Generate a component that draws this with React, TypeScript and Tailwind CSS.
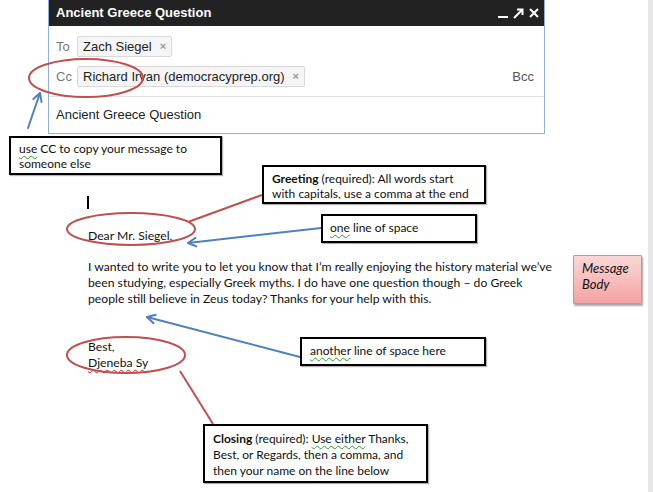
import React from "react";

const BLUE = "#4f81bd";
const RED = "#c0504d";

function Arrow({ x1, y1, x2, y2, color }: { x1: number; y1: number; x2: number; y2: number; color: string }) {
  const a = Math.atan2(y1 - y2, x1 - x2);
  const L = 9;
  const s = 0.5;
  const p1 = [x2 + L * Math.cos(a + s), y2 + L * Math.sin(a + s)];
  const p2 = [x2 + L * Math.cos(a - s), y2 + L * Math.sin(a - s)];
  return (
    <g stroke={color} strokeWidth={2} fill="none" strokeLinecap="round" strokeLinejoin="round">
      <line x1={x1} y1={y1} x2={x2} y2={y2} />
      <polyline points={`${p1[0]},${p1[1]} ${x2},${y2} ${p2[0]},${p2[1]}`} />
    </g>
  );
}

function Chip({ label }: { label: string }) {
  return (
    <div className="flex items-center h-[21px] border border-[#d9d9d9] bg-[#f5f5f5] rounded-[2px] pl-[5px] pr-[5px] gap-[8px]">
      <span className="text-[13px] text-[#222]">{label}</span>
      <span className="text-[11px] text-[#999] font-bold leading-none">×</span>
    </div>
  );
}

const doc = { fontFamily: "Lato, 'Open Sans', sans-serif" };

export default function App() {
  return (
    <div className="flex w-[653px] h-[492px] bg-white overflow-hidden">
      <div className="relative flex-1 flex flex-col">
        {/* Compose window */}
        <div
          className="ml-[48px] w-[497px] h-[134px] border border-t-0 border-[#8db1d9] flex flex-col"
          style={{ fontFamily: "'Liberation Sans', Arial, sans-serif" }}
        >
          <div className="h-[26px] bg-[#222] flex items-center justify-between pl-[7px] pr-[4px]">
            <span className="text-white text-[13px] font-bold">Ancient Greece Question</span>
            <div className="flex items-center gap-[3px] text-white">
              <svg width="12" height="12" viewBox="0 0 12 12"><rect x="1" y="9" width="10" height="2" fill="white" /></svg>
              <svg width="13" height="13" viewBox="0 0 13 13"><path d="M2 11 L10 3 M5 2.5 H10.5 V8" stroke="white" strokeWidth="2" fill="none" /></svg>
              <svg width="12" height="12" viewBox="0 0 12 12"><path d="M2 2 L10 10 M10 2 L2 10" stroke="white" strokeWidth="2" /></svg>
            </div>
          </div>
          <div className="flex flex-col px-[7px] pt-[10px] gap-[9px]">
            <div className="flex items-center">
              <span className="w-[21px] text-[13px] text-[#777]">To</span>
              <Chip label="Zach Siegel" />
            </div>
            <div className="flex items-center">
              <span className="w-[21px] text-[13px] text-[#777]">Cc</span>
              <Chip label="Richard Irvan (democracyprep.org)" />
              <span className="ml-auto mr-[3px] text-[13px] text-[#555]">Bcc</span>
            </div>
          </div>
          <div className="mt-[9px] border-t border-[#e2e2e2] flex-1 flex items-center px-[7px]">
            <span className="text-[13px] text-[#222]">Ancient Greece Question</span>
          </div>
        </div>

        {/* Document */}
        <div className="pl-[88px] text-[12.2px] text-[#111] leading-[16px]" style={doc}>
          <div className="mt-[62px] ml-[-1px] w-[1.5px] h-[13px] bg-black" />
          <div className="mt-[19px]">Dear Mr. Siegel,</div>
          <div className="mt-[15px]">
            I wanted to write you to let you know that I’m really enjoying the history material we’ve
            <br />
            been studying, especially Greek myths. I do have one question though – do Greek
            <br />
            people still believe in Zeus today? Thanks for your help with this.
          </div>
          <div className="mt-[32px]">Best,</div>
          <div>
            <span className="underline decoration-wavy decoration-[#e02020] decoration-1 underline-offset-2">Djeneba Sy</span>
          </div>
        </div>

        {/* Overlay drawing */}
        <svg className="absolute inset-0 pointer-events-none" width="648" height="492">
          <ellipse cx="86" cy="78" rx="57" ry="19" stroke={RED} strokeWidth="2" fill="none" />
          <ellipse cx="131" cy="229" rx="64" ry="16" stroke={RED} strokeWidth="2" fill="none" />
          <ellipse cx="126" cy="355" rx="59" ry="18" stroke={RED} strokeWidth="2" fill="none" />
          <line x1="262" y1="195" x2="188" y2="222" stroke={RED} strokeWidth="2" />
          <line x1="180" y1="371" x2="213" y2="424" stroke={RED} strokeWidth="2" />
          <Arrow x1={28} y1={128} x2={40} y2={93} color={BLUE} />
          <Arrow x1={321} y1={228} x2={188} y2={243} color={BLUE} />
          <Arrow x1={300} y1={357} x2={147} y2={317} color={BLUE} />
        </svg>

        {/* Callouts */}
        <div className="absolute left-[9px] top-[136px] w-[213px] h-[39px] border-2 border-black bg-white px-[8px] pt-[3px] text-[12px] leading-[15px] text-[#111] shadow-[1px_1px_1px_rgba(0,0,0,0.3)]" style={doc}>
          <span className="underline decoration-wavy decoration-[#2e9e2e] decoration-1 underline-offset-2">use</span> CC to copy your message to
          <br />
          someone else
        </div>

        <div className="absolute left-[262px] top-[165px] w-[224px] h-[39px] border-2 border-black bg-white px-[8px] pt-[4px] text-[12px] leading-[15px] text-[#111] shadow-[1px_1px_1px_rgba(0,0,0,0.3)]" style={doc}>
          <b>Greeting</b> (required): All words start
          <br />
          with capitals, use a comma at the end
        </div>

        <div className="absolute left-[321px] top-[214px] w-[156px] h-[29px] border-2 border-black bg-white px-[7px] pt-[4px] text-[12px] leading-[15px] text-[#111] shadow-[1px_1px_1px_rgba(0,0,0,0.3)]" style={doc}>
          <span className="underline decoration-wavy decoration-[#2e9e2e] decoration-1 underline-offset-2">one</span> line of space
        </div>

        <div className="absolute left-[573px] top-[255px] w-[69px] h-[49px] border border-[#d98c8c] rounded-[1px] bg-gradient-to-b from-[#fbd7d7] to-[#f3a3a3] pl-[8px] pt-[4px] text-[13px] leading-[16px] italic text-[#111] shadow-[1px_2px_2px_rgba(0,0,0,0.35)]" style={doc}>
          Message
          <br />
          Body
        </div>

        <div className="absolute left-[300px] top-[337px] w-[186px] h-[29px] border-2 border-black bg-white px-[8px] pt-[4px] text-[12px] leading-[15px] text-[#111] shadow-[1px_1px_1px_rgba(0,0,0,0.3)]" style={doc}>
          <span className="underline decoration-wavy decoration-[#2e9e2e] decoration-1 underline-offset-2">another</span> line of space here
        </div>

        <div className="absolute left-[203px] top-[424px] w-[225px] h-[59px] border-2 border-black bg-white px-[8px] pt-[5px] text-[12px] leading-[16px] text-[#111] shadow-[1px_1px_1px_rgba(0,0,0,0.3)]" style={doc}>
          <b>Closing</b> (required):{" "}
          <span className="underline decoration-wavy decoration-[#2e9e2e] decoration-1 underline-offset-2">Use either</span> Thanks,
          <br />
          Best, or Regards, then a comma, and
          <br />
          then your name on the line below
        </div>
      </div>
      <div className="w-[5px] h-full bg-[#e6e6e6]" />
    </div>
  );
}
